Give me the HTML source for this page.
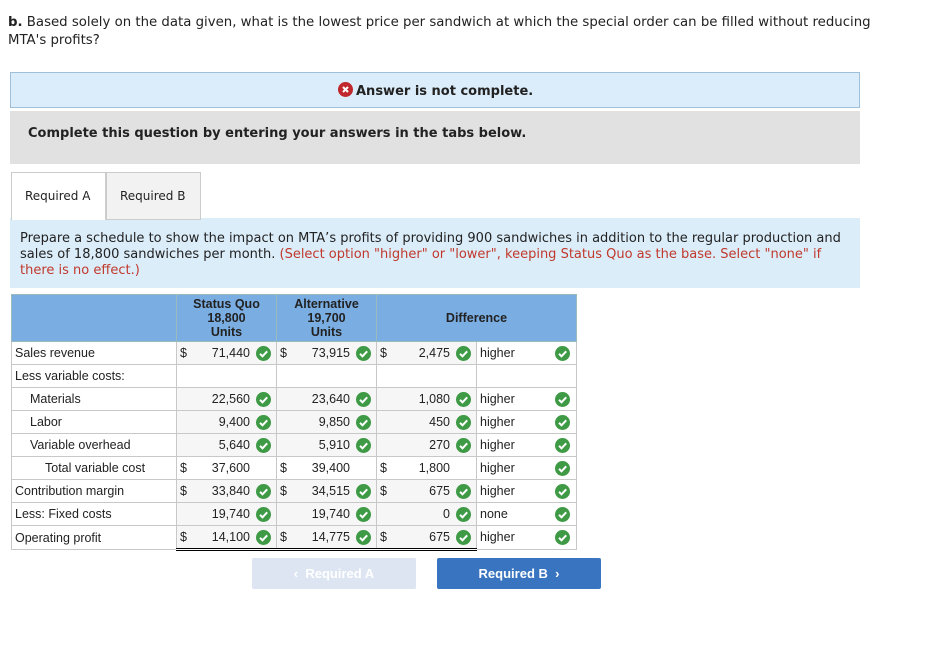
<!DOCTYPE html>
<html><head><meta charset="utf-8"><style>
body{margin:0;width:943px;height:645px;background:#fff;position:relative;font-family:"Liberation Sans",sans-serif;overflow:hidden}
.a{position:absolute}
.v{font-family:"DejaVu Sans",sans-serif}
table{position:absolute;left:11px;top:294px;border-collapse:collapse;font-size:12.5px;color:#222;table-layout:fixed}
td{border:1px solid #c8c8c8;height:22px;padding:0;position:relative;white-space:nowrap}
th{background:#7aade2;border:1px solid #9bb;height:44px;font-size:12.5px;font-weight:bold;color:#222;line-height:14px}
td.l{padding-left:3px}
.d{position:absolute;left:3px;top:4px}
.n{position:absolute;right:26px;top:4px}
.c{position:absolute;right:5px;top:4px;width:15px;height:15px}
.h{position:absolute;left:3px;top:4px}
.cr{position:absolute;right:6px;top:4px;width:15px;height:15px}
.in{background:#f6f6f6}
</style></head><body>
<svg width="0" height="0" style="position:absolute"><defs><g id="ck"><circle cx="7.5" cy="7.5" r="7.5" fill="#3f9a46"/><path d="M4 7.8l2.5 2.5 4.7-5" stroke="#fff" stroke-width="2" fill="none"/></g></defs></svg>
<div class="a v" style="left:8px;top:14px;font-size:13.3px;color:#222;line-height:18px;width:900px"><b>b.</b> Based solely on the data given, what is the lowest price per sandwich at which the special order can be filled without reducing MTA's profits?</div>
<div class="a" style="left:10px;top:72px;width:848px;height:34px;background:#dbedfa;border:1px solid #9fc0d8"></div>
<div class="a v" style="left:338px;top:82px;font-size:13px;font-weight:bold;color:#222"><svg width="15" height="15" style="vertical-align:-2px;margin-right:3px"><circle cx="7.5" cy="7.5" r="7.5" fill="#c0282d"/><path d="M5 5l5 5M10 5l-5 5" stroke="#fff" stroke-width="2"/></svg>Answer is not complete.</div>
<div class="a" style="left:10px;top:111px;width:850px;height:53px;background:#e1e1e1"></div>
<div class="a v" style="left:28px;top:126px;font-size:13px;font-weight:bold;color:#222">Complete this question by entering your answers in the tabs below.</div>
<div class="a" style="left:10px;top:218px;width:850px;height:70px;background:#dcedfa"></div>
<div class="a" style="left:11px;top:172px;width:93px;height:47px;background:#fff;border:1px solid #ccc;border-bottom:none"></div>
<div class="a" style="left:106px;top:172px;width:93px;height:46px;background:#f2f2f2;border:1px solid #ccc"></div>
<div class="a v" style="left:25px;top:189px;font-size:12px;color:#222">Required A</div>
<div class="a v" style="left:120px;top:189px;font-size:12px;color:#222">Required B</div>
<div class="a v" style="left:20px;top:231px;font-size:13px;line-height:16px;color:#222;width:830px">Prepare a schedule to show the impact on MTA’s profits of providing 900 sandwiches in addition to the regular production and sales of 18,800 sandwiches per month. <span style="color:#c0392b">(Select option "higher" or "lower", keeping Status Quo as the base. Select "none" if there is no effect.)</span></div>
<table>
<colgroup><col style="width:165px"><col style="width:100px"><col style="width:100px"><col style="width:100px"><col style="width:100px"></colgroup>
<tr><th></th><th>Status Quo<br>18,800<br>Units</th><th>Alternative<br>19,700<br>Units</th><th colspan="2">Difference</th></tr>
<tr><td class="l">Sales revenue</td><td class="in"><span class="d">$</span><span class="n">71,440</span><svg class="c"><use href="#ck"/></svg></td><td class="in"><span class="d">$</span><span class="n">73,915</span><svg class="c"><use href="#ck"/></svg></td><td class="in"><span class="d">$</span><span class="n">2,475</span><svg class="c"><use href="#ck"/></svg></td><td><span class="h">higher</span><svg class="cr"><use href="#ck"/></svg></td></tr>
<tr><td class="l">Less variable costs:</td><td></td><td></td><td></td><td></td></tr>
<tr><td class="l" style="padding-left:18px">Materials</td><td class="in"><span class="n">22,560</span><svg class="c"><use href="#ck"/></svg></td><td class="in"><span class="n">23,640</span><svg class="c"><use href="#ck"/></svg></td><td class="in"><span class="n">1,080</span><svg class="c"><use href="#ck"/></svg></td><td><span class="h">higher</span><svg class="cr"><use href="#ck"/></svg></td></tr>
<tr><td class="l" style="padding-left:18px">Labor</td><td class="in"><span class="n">9,400</span><svg class="c"><use href="#ck"/></svg></td><td class="in"><span class="n">9,850</span><svg class="c"><use href="#ck"/></svg></td><td class="in"><span class="n">450</span><svg class="c"><use href="#ck"/></svg></td><td><span class="h">higher</span><svg class="cr"><use href="#ck"/></svg></td></tr>
<tr><td class="l" style="padding-left:18px">Variable overhead</td><td class="in"><span class="n">5,640</span><svg class="c"><use href="#ck"/></svg></td><td class="in"><span class="n">5,910</span><svg class="c"><use href="#ck"/></svg></td><td class="in"><span class="n">270</span><svg class="c"><use href="#ck"/></svg></td><td><span class="h">higher</span><svg class="cr"><use href="#ck"/></svg></td></tr>
<tr><td class="l" style="padding-left:33px">Total variable cost</td><td style="border-top:1px solid #000"><span class="d">$</span><span class="n">37,600</span></td><td style="border-top:1px solid #000"><span class="d">$</span><span class="n">39,400</span></td><td style="border-top:1px solid #000"><span class="d">$</span><span class="n">1,800</span></td><td><span class="h">higher</span><svg class="cr"><use href="#ck"/></svg></td></tr>
<tr><td class="l">Contribution margin</td><td class="in"><span class="d">$</span><span class="n">33,840</span><svg class="c"><use href="#ck"/></svg></td><td class="in"><span class="d">$</span><span class="n">34,515</span><svg class="c"><use href="#ck"/></svg></td><td class="in"><span class="d">$</span><span class="n">675</span><svg class="c"><use href="#ck"/></svg></td><td><span class="h">higher</span><svg class="cr"><use href="#ck"/></svg></td></tr>
<tr><td class="l">Less: Fixed costs</td><td class="in"><span class="n">19,740</span><svg class="c"><use href="#ck"/></svg></td><td class="in"><span class="n">19,740</span><svg class="c"><use href="#ck"/></svg></td><td class="in"><span class="n">0</span><svg class="c"><use href="#ck"/></svg></td><td><span class="h">none</span><svg class="cr"><use href="#ck"/></svg></td></tr>
<tr><td class="l">Operating profit</td><td class="in" style="border-bottom:3px double #000"><span class="d">$</span><span class="n">14,100</span><svg class="c"><use href="#ck"/></svg></td><td class="in" style="border-bottom:3px double #000"><span class="d">$</span><span class="n">14,775</span><svg class="c"><use href="#ck"/></svg></td><td class="in" style="border-bottom:3px double #000"><span class="d">$</span><span class="n">675</span><svg class="c"><use href="#ck"/></svg></td><td><span class="h">higher</span><svg class="cr"><use href="#ck"/></svg></td></tr>
</table>
<div class="a" style="left:252px;top:558px;width:164px;height:31px;background:#dce5f1;border-radius:2px;color:#fff;font-weight:bold;font-size:13px;text-align:center;line-height:31px">&lsaquo;&nbsp; Required A</div>
<div class="a" style="left:437px;top:558px;width:164px;height:31px;background:#3874c0;border-radius:2px;color:#fff;font-weight:bold;font-size:13px;text-align:center;line-height:31px">Required B &nbsp;&rsaquo;</div>
</body></html>
